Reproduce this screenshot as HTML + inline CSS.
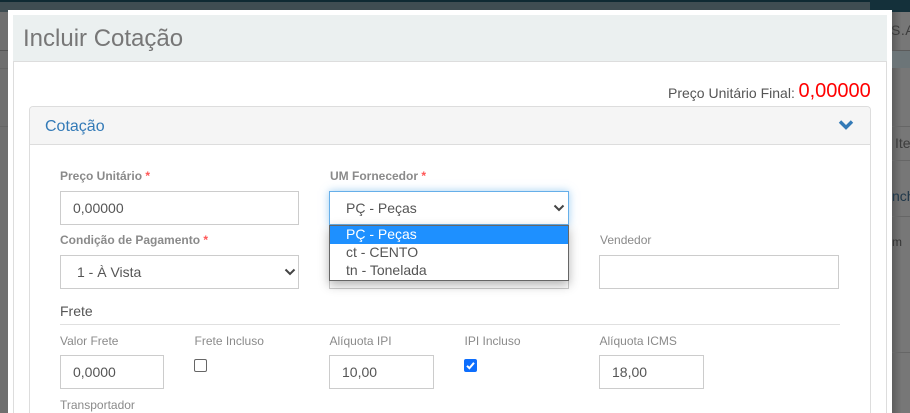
<!DOCTYPE html>
<html lang="pt-BR"><head><meta charset="utf-8"><title>Incluir Cotação</title>
<style>
*{box-sizing:border-box}
html,body{margin:0;padding:0}
body{width:910px;height:413px;overflow:hidden;position:relative;background:#6e6e6e;font-family:"Liberation Sans",sans-serif;color:#555}
.a{position:absolute}
.t{position:absolute;white-space:nowrap;line-height:1}
.lb{font-size:12px;font-weight:700;color:#8a8a8a}
.l2{font-size:12px;color:#8a8a8a}
.req{color:#f55}
.inp{position:absolute;background:#fff;border:1px solid #ccc;font-size:14px;color:#555;padding-left:12px;display:flex;align-items:center}
</style></head><body>
<div class="a" style="left:0;top:0;width:910px;height:2px;background:#0f2a33"></div>
<div class="a" style="left:0;top:2px;width:910px;height:10px;background:#3f4d52"></div>
<div class="a" style="left:870px;top:0;width:40px;height:12px;background:#14303a"></div>
<div class="a" style="left:0;top:12px;width:8px;height:401px;background:#6f6f6f"></div>
<div class="a" style="left:0;top:50px;width:8px;height:1px;background:#555"></div>
<div class="a" style="left:0;top:68px;width:8px;height:1px;background:#666"></div>
<div class="a" style="left:0;top:126px;width:8px;height:1px;background:#666"></div>
<div class="a" style="left:892px;top:12px;width:18px;height:401px;background:#777"></div>
<div class="a" style="left:892px;top:12px;width:9px;height:401px;background:linear-gradient(90deg,#5e5e5e,#757575)"></div>
<div class="a" style="left:892px;top:50px;width:18px;height:1px;background:#5b5b5b"></div>
<div class="a" style="left:892px;top:51px;width:18px;height:17px;background:#6c7578"></div>
<div class="a" style="left:892px;top:126px;width:18px;height:1px;background:#666"></div>
<div class="a" style="left:892px;top:160px;width:18px;height:1px;background:#666"></div>
<div class="a" style="left:892px;top:216px;width:18px;height:1px;background:#666"></div>
<div class="a" style="left:892px;top:352px;width:18px;height:1px;background:#666"></div>
<div class="t" style="left:891px;top:23px;font-size:14px;color:#3c3c3c;width:19px;overflow:hidden;letter-spacing:.5px">S.A</div>
<div class="t" style="left:895px;top:136px;font-size:14px;color:#3c3c3c;width:15px;overflow:hidden">Ite</div>
<div class="t" style="left:892px;top:189px;font-size:14px;color:#20384a;width:18px;overflow:hidden">nch</div>
<div class="t" style="left:892px;top:236px;font-size:12px;color:#333;width:18px;overflow:hidden">m</div>
<div class="a" style="left:8px;top:10px;width:884px;height:403px;background:#fff"></div>
<div class="a" style="left:13px;top:15px;width:874px;height:47px;background:#ebf0f0"></div>
<div class="a" style="left:13px;top:61px;width:874px;height:352px;background:#fff;border:1px solid #ddd;border-bottom:0"></div>
<div class="t" style="left:23px;top:27px;font-size:24px;color:#777">Incluir Cotação</div>
<div class="t" style="left:668px;top:86px;font-size:14px;color:#555">Preço Unitário Final:</div>
<div class="t" style="left:798.5px;top:81px;font-size:20px;color:#f00">0,00000</div>
<div class="a" style="left:29px;top:106px;width:842px;height:307px;border:1px solid #ddd;border-bottom:0;border-radius:4px 4px 0 0;background:#fff"></div>
<div class="a" style="left:30px;top:107px;width:840px;height:38px;background:#f5f5f5;border-bottom:1px solid #ddd;border-radius:3px 3px 0 0"></div>
<div class="t" style="left:45px;top:119px;font-size:16px;color:#337ab7">Cotação</div>
<svg class="a" style="left:838px;top:119px" width="16" height="12" viewBox="0 0 16 12"><path d="M2 2.5 8 8.5 14 2.5" fill="none" stroke="#337ab7" stroke-width="3.4"/></svg>
<div class="t lb" style="left:60px;top:170px">Preço Unitário <span class="req">*</span></div>
<div class="inp" style="left:60px;top:191px;width:239px;height:34px">0,00000</div>
<div class="t lb" style="left:330px;top:170px">UM Fornecedor <span class="req">*</span></div>
<div class="a" style="left:329px;top:264px;width:240px;height:25px;border:1px solid #ccc;background:#fff"></div>
<div class="inp" style="left:329px;top:191px;width:240px;height:34px;border-color:#66afe9;box-shadow:0 0 8px rgba(102,175,233,.6);padding-left:16px">PÇ - Peças</div>
<svg class="a" style="left:553px;top:203px" width="12" height="10" viewBox="0 0 12 10"><path d="M1.5 2.5 6 7 10.5 2.5" fill="none" stroke="#444" stroke-width="2"/></svg>
<div class="a" style="left:329px;top:225px;width:240px;height:56px;background:#fff;border:1px solid #666;box-shadow:0 4px 10px rgba(0,0,0,.3)"></div>
<div class="a" style="left:330px;top:226px;width:238px;height:18px;background:#1e90ff"></div>
<div class="t" style="left:346px;top:227px;font-size:14px;color:#fff">PÇ - Peças</div>
<div class="t" style="left:346px;top:245px;font-size:14px;color:#555">ct - CENTO</div>
<div class="t" style="left:346px;top:263px;font-size:14px;color:#555">tn - Tonelada</div>
<div class="t lb" style="left:60px;top:234px">Condição de Pagamento <span class="req">*</span></div>
<div class="inp" style="left:60px;top:255px;width:239px;height:34px;padding-left:16px">1 - À Vista</div>
<svg class="a" style="left:284px;top:267px" width="12" height="10" viewBox="0 0 12 10"><path d="M1.5 2.5 6 7 10.5 2.5" fill="none" stroke="#444" stroke-width="2"/></svg>
<div class="t l2" style="left:600px;top:234px">Vendedor</div>
<div class="inp" style="left:599px;top:255px;width:240px;height:34px"></div>
<div class="t" style="left:60px;top:304px;font-size:14px;color:#555">Frete</div>
<div class="a" style="left:60px;top:324px;width:780px;height:1px;background:#e0e0e0"></div>
<div class="t l2" style="left:60px;top:335px">Valor Frete</div>
<div class="inp" style="left:60px;top:355px;width:104px;height:34px">0,0000</div>
<div class="t l2" style="left:194.5px;top:335px">Frete Incluso</div>
<div class="a" style="left:194px;top:359px;width:13px;height:13px;border:1px solid #666;border-radius:2px;background:#fff"></div>
<div class="t l2" style="left:329.5px;top:335px">Alíquota IPI</div>
<div class="inp" style="left:329px;top:355px;width:105px;height:34px">10,00</div>
<div class="t l2" style="left:464.5px;top:335px">IPI Incluso</div>
<div class="a" style="left:464px;top:359px;width:13px;height:13px;border-radius:2px;background:#0d6efd"></div>
<svg class="a" style="left:464px;top:359px" width="13" height="13" viewBox="0 0 13 13"><path d="M3 6.8 5.4 9.2 10 3.8" fill="none" stroke="#fff" stroke-width="2"/></svg>
<div class="t l2" style="left:599.5px;top:335px">Alíquota ICMS</div>
<div class="inp" style="left:599px;top:355px;width:105px;height:34px">18,00</div>
<div class="t l2" style="left:60px;top:399px">Transportador</div>
</body></html>
